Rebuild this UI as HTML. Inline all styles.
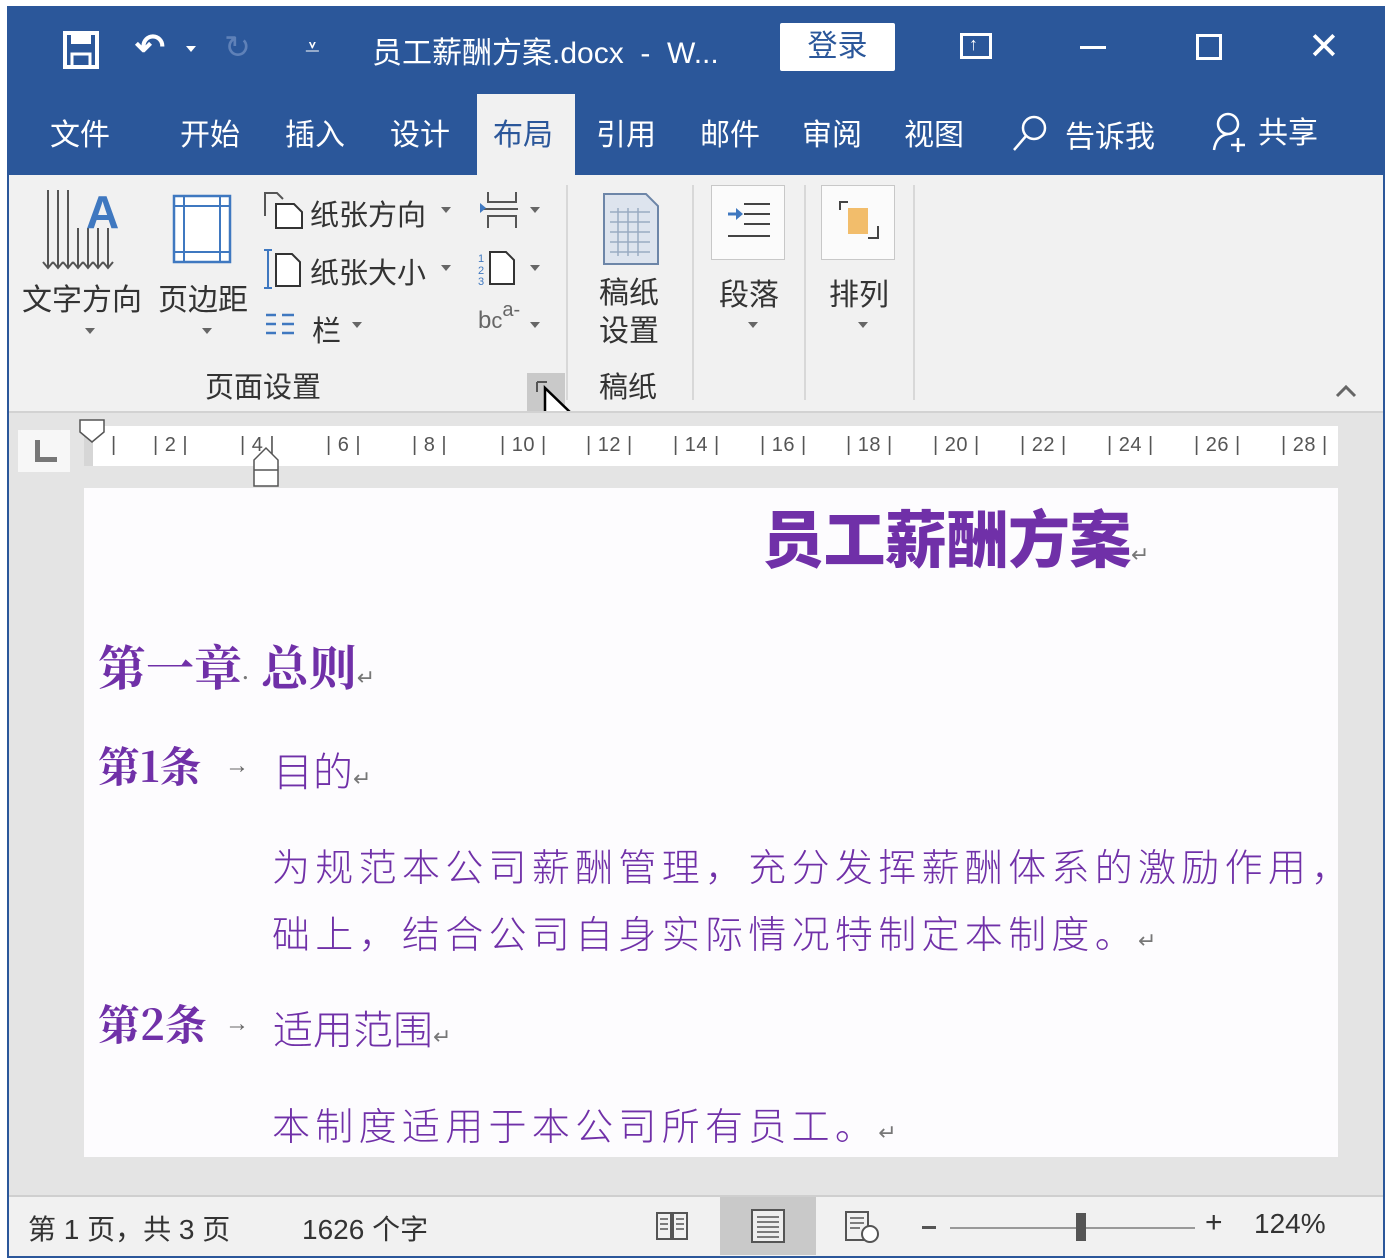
<!DOCTYPE html><html><head><meta charset="utf-8"><style>
*{margin:0;padding:0;box-sizing:border-box}
body{width:1390px;height:1260px;background:#fff;position:relative;overflow:hidden;font-family:"Liberation Sans","Noto Sans CJK SC",sans-serif}
.a{position:absolute;white-space:nowrap}
.w{color:#fff}
.t{color:#333}
.p{color:#7030a8}
.dd{position:absolute;width:0;height:0;border-left:5px solid transparent;border-right:5px solid transparent;border-top:6px solid #666}
</style></head><body>
<div class="a" style="left:7px;top:6px;width:1378px;height:1252px;background:#2b579a"></div>
<svg class="a" style="left:62px;top:30px" width="38" height="40" viewBox="0 0 38 40"><rect x="3" y="3" width="32" height="34" fill="none" stroke="#fff" stroke-width="4"/><rect x="9" y="3" width="20" height="11" fill="#fff"/><rect x="10" y="24" width="18" height="13" fill="none" stroke="#fff" stroke-width="3"/></svg>
<div class="a w" style="left:135px;top:26px;font-size:36px;font-weight:bold">↶</div>
<div class="dd" style="left:186px;top:46px;border-top-color:#fff"></div>
<div class="a" style="left:224px;top:28px;font-size:32px;color:#5f81b8">↻</div>
<div class="a w" style="left:305px;top:32px;font-size:26px">⩡</div>
<div class="a w" style="left:372px;top:28px;font-size:30px">员工薪酬方案.docx &nbsp;- &nbsp;W...</div>
<div class="a" style="left:780px;top:23px;width:115px;height:48px;background:#fff;border-radius:2px;color:#2b579a;font-size:30px;text-align:center;line-height:48px">登录</div>
<div class="a" style="left:960px;top:33px;width:32px;height:26px;border:3px solid #fff"></div>
<div class="a w" style="left:969px;top:34px;font-size:18px;font-weight:bold">↑</div>
<div class="a" style="left:1080px;top:46px;width:26px;height:3px;background:#fff"></div>
<div class="a" style="left:1196px;top:34px;width:26px;height:26px;border:3px solid #fff"></div>
<div class="a w" style="left:1308px;top:24px;font-size:38px;font-weight:300">✕</div>
<div class="a" style="left:477px;top:94px;width:98px;height:90px;background:#f1f1f1"></div>
<div class="a w" style="left:50px;top:110px;font-size:30px">文件</div>
<div class="a w" style="left:180px;top:110px;font-size:30px">开始</div>
<div class="a w" style="left:285px;top:110px;font-size:30px">插入</div>
<div class="a w" style="left:390px;top:110px;font-size:30px">设计</div>
<div class="a" style="left:493px;top:110px;font-size:30px;color:#2b579a">布局</div>
<div class="a w" style="left:596px;top:110px;font-size:30px">引用</div>
<div class="a w" style="left:700px;top:110px;font-size:30px">邮件</div>
<div class="a w" style="left:802px;top:110px;font-size:30px">审阅</div>
<div class="a w" style="left:904px;top:110px;font-size:30px">视图</div>
<svg class="a" style="left:1010px;top:112px" width="40" height="42"><circle cx="24" cy="16" r="11" fill="none" stroke="#fff" stroke-width="2.5"/><line x1="16" y1="24" x2="4" y2="38" stroke="#fff" stroke-width="2.5"/></svg>
<div class="a w" style="left:1065px;top:112px;font-size:30px">告诉我</div>
<svg class="a" style="left:1210px;top:110px" width="44" height="44"><circle cx="18" cy="14" r="10" fill="none" stroke="#fff" stroke-width="2.5"/><path d="M4 40 Q6 26 18 24" fill="none" stroke="#fff" stroke-width="2.5"/><path d="M28 28v14M21 35h14" stroke="#fff" stroke-width="2.5"/></svg>
<div class="a w" style="left:1258px;top:108px;font-size:30px">共享</div>
<div class="a" style="left:9px;top:175px;width:1374px;height:236px;background:#f1f1f1"></div>
<svg class="a" style="left:40px;top:188px" width="90" height="85"><g stroke="#555" stroke-width="2" fill="none"><path d="M8 2v78M18 2v78M28 2v78M38 40v40M48 40v40M58 40v40M68 40v40"/><path d="M3 74l5 6 5-6M13 74l5 6 5-6M23 74l5 6 5-6M33 74l5 6 5-6M43 74l5 6 5-6M53 74l5 6 5-6M63 74l5 6 5-6"/></g><text x="46" y="40" font-family="Liberation Sans" font-weight="bold" font-size="46" fill="#3f78c0">A</text></svg>
<div class="a t" style="left:22px;top:275px;font-size:30px">文字方向</div>
<div class="dd" style="left:85px;top:328px"></div>
<svg class="a" style="left:172px;top:194px" width="62" height="72"><rect x="2" y="2" width="56" height="66" fill="#fff" stroke="#3f78c0" stroke-width="2.5"/><path d="M12 2v66M48 2v66M2 12h56M2 58h56" stroke="#3f78c0" stroke-width="2"/></svg>
<div class="a t" style="left:158px;top:275px;font-size:30px">页边距</div>
<div class="dd" style="left:202px;top:328px"></div>
<svg class="a" style="left:262px;top:190px" width="44" height="40"><path d="M3 26V3h12l6 6" fill="none" stroke="#555" stroke-width="2"/><path d="M14 14h18l8 8v16H14z" fill="#fff" stroke="#333" stroke-width="2"/></svg>
<div class="a t" style="left:310px;top:192px;font-size:29px">纸张方向</div>
<div class="dd" style="left:441px;top:207px"></div>
<svg class="a" style="left:264px;top:246px" width="40" height="44"><path d="M4 4v38M0 4h8M0 42h8" stroke="#3f78c0" stroke-width="2"/><path d="M12 8h16l8 8v24H12z" fill="#fff" stroke="#333" stroke-width="2"/></svg>
<div class="a t" style="left:310px;top:250px;font-size:29px">纸张大小</div>
<div class="dd" style="left:441px;top:265px"></div>
<svg class="a" style="left:264px;top:312px" width="36" height="26"><path d="M2 3h10M2 12h10M2 21h10M18 3h12M18 12h12M18 21h12" stroke="#3f78c0" stroke-width="2.5"/></svg>
<div class="a t" style="left:312px;top:308px;font-size:29px">栏</div>
<div class="dd" style="left:352px;top:322px"></div>
<svg class="a" style="left:478px;top:190px" width="42" height="40"><path d="M10 2v10h28V2M10 38V26h28v12M2 19h38" fill="none" stroke="#555" stroke-width="2"/><path d="M2 13l6 5-6 5z" fill="#3f78c0"/></svg>
<div class="dd" style="left:530px;top:207px"></div>
<svg class="a" style="left:478px;top:248px" width="42" height="40"><text x="0" y="14" font-size="11" fill="#3f78c0">1</text><text x="0" y="26" font-size="11" fill="#3f78c0">2</text><text x="0" y="37" font-size="11" fill="#3f78c0">3</text><path d="M12 4h16l8 8v24H12z" fill="#fff" stroke="#333" stroke-width="2"/></svg>
<div class="dd" style="left:530px;top:265px"></div>
<div class="a" style="left:478px;top:306px;font-size:26px;color:#666;line-height:1"><span style="font-size:24px">b</span><span style="font-size:22px">c</span><span style="position:relative;top:-12px;font-size:20px">a-</span></div>
<div class="dd" style="left:530px;top:322px"></div>
<div class="a t" style="left:205px;top:364px;font-size:29px">页面设置</div>
<div class="a" style="left:527px;top:373px;width:38px;height:38px;background:#c9c9c9"></div>
<svg class="a" style="left:535px;top:380px" width="46" height="60"><path d="M2 2h10M2 2v10" stroke="#555" stroke-width="2"/><path d="M10 8v38l9-9 7 16 6-3-7-15h13z" fill="#fff" stroke="#000" stroke-width="2.5"/></svg>
<div class="a" style="left:566px;top:185px;width:2px;height:215px;background:#d8d8d8"></div>
<svg class="a" style="left:602px;top:192px" width="60" height="76"><path d="M2 2h42l12 12v58H2z" fill="#dde4ee" stroke="#6d86a8" stroke-width="2"/><g stroke="#9aabc2" stroke-width="1.5"><path d="M8 20h40M8 30h40M8 40h40M8 50h40M8 60h40M16 16v48M26 16v48M36 16v48"/></g></svg>
<div class="a t" style="left:599px;top:275px;font-size:30px;line-height:38px">稿纸<br>设置</div>
<div class="a t" style="left:599px;top:364px;font-size:29px">稿纸</div>
<div class="a" style="left:692px;top:185px;width:2px;height:215px;background:#d8d8d8"></div>
<div class="a" style="left:711px;top:185px;width:74px;height:75px;background:#fbfbfb;border:1.5px solid #c8c8c8"></div>
<svg class="a" style="left:726px;top:200px" width="46" height="40"><path d="M18 4h26M18 14h26M18 24h26M2 36h42" stroke="#444" stroke-width="2"/><path d="M2 14h9" stroke="#3f78c0" stroke-width="3"/><path d="M10 8l7 6-7 6z" fill="#3f78c0"/></svg>
<div class="a t" style="left:719px;top:270px;font-size:30px">段落</div>
<div class="dd" style="left:748px;top:322px"></div>
<div class="a" style="left:804px;top:185px;width:2px;height:215px;background:#d8d8d8"></div>
<div class="a" style="left:821px;top:185px;width:74px;height:75px;background:#fbfbfb;border:1.5px solid #c8c8c8"></div>
<svg class="a" style="left:838px;top:200px" width="44" height="44"><path d="M2 10V2h8M40 26v12h-10" fill="none" stroke="#444" stroke-width="2"/><rect x="10" y="8" width="20" height="26" fill="#f2bd6b"/></svg>
<div class="a t" style="left:829px;top:270px;font-size:30px">排列</div>
<div class="dd" style="left:858px;top:322px"></div>
<div class="a" style="left:913px;top:185px;width:2px;height:215px;background:#d8d8d8"></div>
<svg class="a" style="left:1334px;top:382px" width="24" height="18"><path d="M3 14l9-9 9 9" fill="none" stroke="#666" stroke-width="3"/></svg>
<div class="a" style="left:9px;top:411px;width:1374px;height:784px;background:#e4e4e4"></div>
<div class="a" style="left:9px;top:411px;width:1374px;height:2px;background:#d2d2d2"></div>
<div class="a" style="left:18px;top:430px;width:52px;height:42px;background:#f7f7f7"></div>
<div class="a" style="left:35px;top:440px;width:5px;height:22px;background:#777"></div>
<div class="a" style="left:35px;top:457px;width:22px;height:5px;background:#777"></div>
<div class="a" style="left:84px;top:426px;width:1254px;height:40px;background:#fff"></div>
<div class="a" style="left:84px;top:426px;width:9px;height:40px;background:#d6d6d6"></div>
<div class="a" style="left:100px;top:434px;font-size:20px;color:#555;letter-spacing:0.5px">
<span style="position:absolute;left:11px">|</span>
<span style="position:absolute;left:53px">| 2 |</span>
<span style="position:absolute;left:140px">| 4 |</span>
<span style="position:absolute;left:226px">| 6 |</span>
<span style="position:absolute;left:312px">| 8 |</span>
<span style="position:absolute;left:400px">| 10 |</span>
<span style="position:absolute;left:486px">| 12 |</span>
<span style="position:absolute;left:573px">| 14 |</span>
<span style="position:absolute;left:660px">| 16 |</span>
<span style="position:absolute;left:746px">| 18 |</span>
<span style="position:absolute;left:833px">| 20 |</span>
<span style="position:absolute;left:920px">| 22 |</span>
<span style="position:absolute;left:1007px">| 24 |</span>
<span style="position:absolute;left:1094px">| 26 |</span>
<span style="position:absolute;left:1181px">| 28 |</span>
</div>
<svg class="a" style="left:78px;top:418px" width="30" height="26"><path d="M2 2h24v12l-12 10L2 14z" fill="#fff" stroke="#555" stroke-width="1.5"/></svg>
<svg class="a" style="left:252px;top:446px" width="30" height="42"><path d="M2 14l12-12 12 12v10H2zM2 24h24v16H2z" fill="#fff" stroke="#555" stroke-width="1.5"/></svg>
<div class="a" style="left:84px;top:488px;width:1254px;height:669px;background:#fdfcfe"></div>
<div class="a p" style="left:762px;top:498px;font-size:62px;font-weight:900;font-family:'Noto Sans CJK SC',sans-serif;letter-spacing:-0.5px;line-height:1.2">员工薪酬方案<span style="font-size:22px;color:#777;font-weight:normal">↵</span></div>
<div class="a p" style="left:98px;top:636px;font-size:48px;font-weight:bold;font-family:'Noto Serif CJK SC',serif;line-height:1.2">第一章<span style="font-size:20px;color:#777">·</span> 总则<span style="font-size:22px;color:#777;font-weight:normal">↵</span></div>
<div class="a p" style="left:98px;top:740px;font-size:42px;font-weight:bold;font-family:'Noto Serif CJK SC',serif;line-height:1.2">第1条</div>
<div class="a" style="left:225px;top:752px;font-size:24px;color:#666">→</div>
<div class="a p" style="left:273px;top:740px;font-size:40px;font-family:'Noto Sans CJK SC',sans-serif;font-weight:300">目的<span style="font-size:22px;color:#777">↵</span></div>
<div class="a p" style="left:272px;top:837px;font-size:38px;letter-spacing:5.3px;font-family:'Noto Sans CJK SC',sans-serif;font-weight:300">为规范本公司薪酬管理，充分发挥薪酬体系的激励作用，</div>
<div class="a p" style="left:272px;top:904px;font-size:38px;letter-spacing:5.3px;font-family:'Noto Sans CJK SC',sans-serif;font-weight:300">础上，结合公司自身实际情况特制定本制度。<span style="font-size:22px;color:#777;letter-spacing:0">↵</span></div>
<div class="a p" style="left:98px;top:998px;font-size:42px;font-weight:bold;font-family:'Noto Serif CJK SC',serif;line-height:1.2">第2条</div>
<div class="a" style="left:225px;top:1010px;font-size:24px;color:#666">→</div>
<div class="a p" style="left:273px;top:998px;font-size:40px;font-family:'Noto Sans CJK SC',sans-serif;font-weight:300">适用范围<span style="font-size:22px;color:#777">↵</span></div>
<div class="a p" style="left:272px;top:1096px;font-size:38px;letter-spacing:5.3px;font-family:'Noto Sans CJK SC',sans-serif;font-weight:300">本制度适用于本公司所有员工。<span style="font-size:22px;color:#777;letter-spacing:0">↵</span></div>
<div class="a" style="left:9px;top:1195px;width:1374px;height:61px;background:#f1f1f1;border-top:2px solid #cfcfcf"></div>
<div class="a t" style="left:28px;top:1208px;font-size:28px">第 1 页，共 3 页</div>
<div class="a t" style="left:302px;top:1208px;font-size:28px">1626 个字</div>
<svg class="a" style="left:655px;top:1210px" width="34" height="32"><path d="M2 3h14v26H2zM18 3h14v26H18z" fill="none" stroke="#555" stroke-width="2"/><path d="M5 9h8M5 14h8M5 19h8M21 9h8M21 14h8M21 19h8" stroke="#555" stroke-width="1.5"/></svg>
<div class="a" style="left:720px;top:1197px;width:96px;height:58px;background:#c9c9c9"></div>
<svg class="a" style="left:750px;top:1208px" width="36" height="36"><rect x="2" y="2" width="32" height="32" fill="#eee" stroke="#555" stroke-width="2"/><path d="M7 9h22M7 14h22M7 19h22M7 24h22M7 29h22" stroke="#555" stroke-width="1.5"/></svg>
<svg class="a" style="left:844px;top:1210px" width="36" height="34"><path d="M2 2h22v28H2z" fill="none" stroke="#555" stroke-width="2"/><path d="M6 8h14M6 13h14M6 18h10" stroke="#555" stroke-width="1.5"/><circle cx="26" cy="24" r="8" fill="#fff" stroke="#555" stroke-width="2"/></svg>
<div class="a" style="left:922px;top:1226px;width:14px;height:3px;background:#555"></div>
<div class="a" style="left:950px;top:1227px;width:245px;height:2px;background:#999"></div>
<div class="a" style="left:1076px;top:1213px;width:10px;height:28px;background:#555"></div>
<div class="a t" style="left:1205px;top:1206px;font-size:30px">+</div>
<div class="a t" style="left:1254px;top:1208px;font-size:28px">124%</div>
</body></html>
